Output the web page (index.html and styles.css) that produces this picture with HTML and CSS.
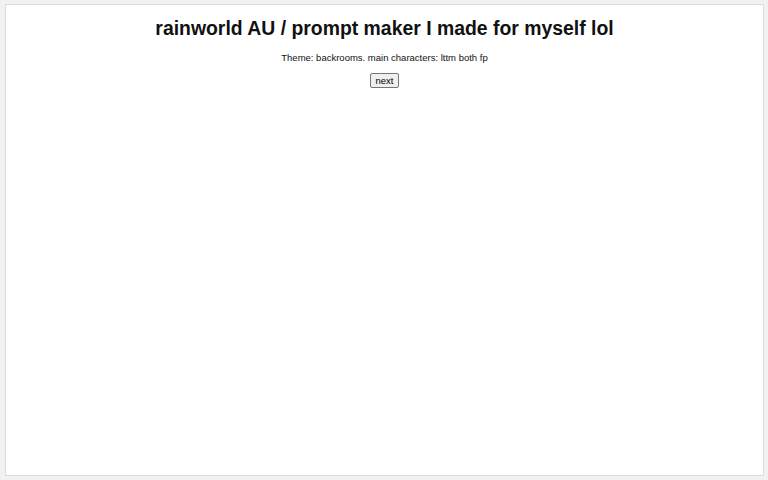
FILE: index.html
```html
<!DOCTYPE html>
<html lang="en">

<head>
    <meta charset="UTF-8">
    <meta name="viewport" content="width=device-width, initial-scale=1.0">
    <title>rainworld AU prompt maker</title>
    <link rel="stylesheet" href="styles.css">
</head>

<body>
    <div id="page">
        <h1>rainworld AU / prompt maker I made for myself lol</h1>

        <p id="prompt">Theme: backrooms. main characters: lttm both fp</p>

        <button id="next">next</button>
    </div>

    <script>
        const themes = ['backrooms', 'cafe', 'space', 'fantasy', 'high school', 'post apocalypse'];
        const chars = ['lttm both fp', 'pebbles and moon', 'survivor and monk', 'hunter and nsh', 'saint and rivulet'];
        const prompt = document.getElementById('prompt');

        document.getElementById('next').addEventListener('click', () => {
            const t = themes[Math.floor(Math.random() * themes.length)];
            const c = chars[Math.floor(Math.random() * chars.length)];
            prompt.textContent = `Theme: ${t}. main characters: ${c}`;
        });
    </script>
</body>

</html>
```

FILE: styles.css
```css
body {
    margin: 0;
    padding: 4px 4px 4px 5px;
    background-color: #f2f2f2;
    font-family: "Liberation Sans", Arial, sans-serif;
    color: #111;
}

#page {
    height: 470px;
    background-color: white;
    border: 1px solid #dcdcdc;
    text-align: center;
}

h1 {
    margin: 12px 0 0;
    font-size: 19.4px;
    line-height: 23px;
}

#prompt {
    margin: 12px 0 0;
    font-size: 9.5px;
    line-height: 11px;
}

#next {
    margin-top: 10px;
    font-family: "Liberation Sans", Arial, sans-serif;
    font-size: 9.5px;
    padding: 1px 5px;
    border: 1px solid #767676;
    border-radius: 2px;
    background-color: #efefef;
    color: black;
}
```
